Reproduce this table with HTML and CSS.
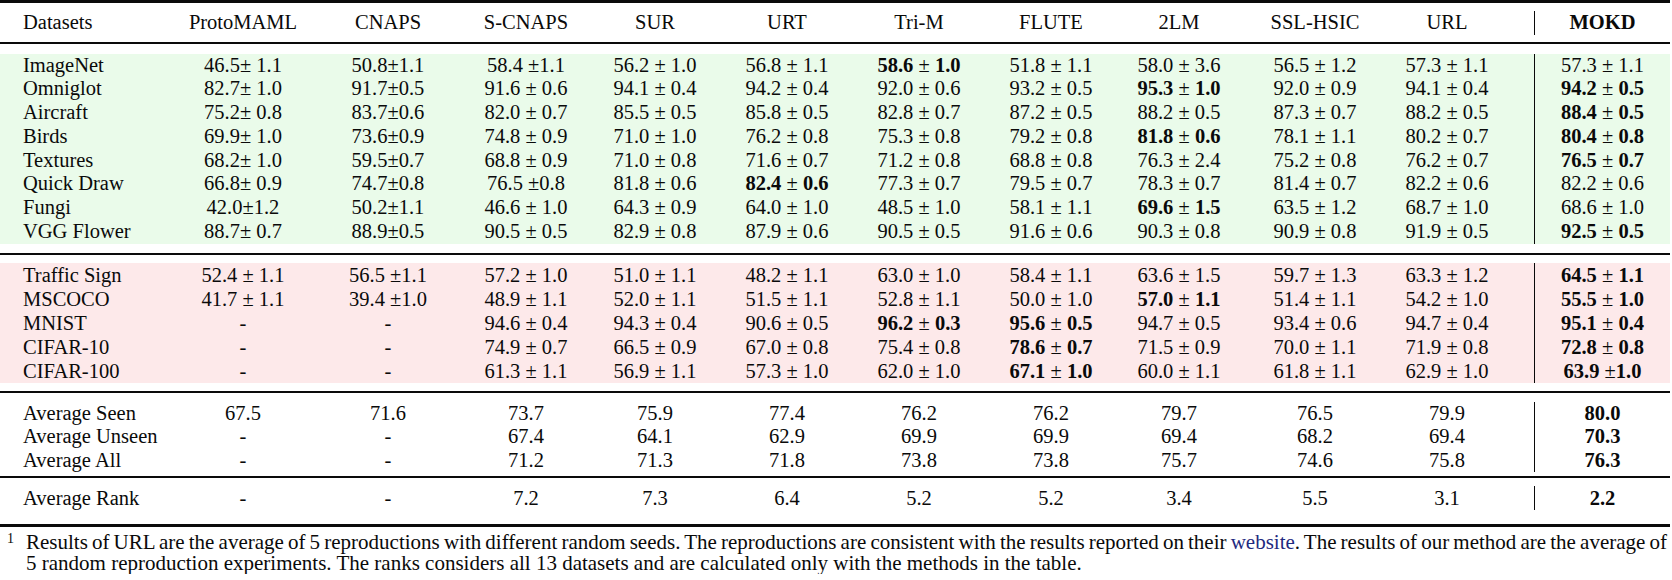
FILE: index.html
```html
<!DOCTYPE html>
<html lang="en">
<head>
<meta charset="utf-8">
<title>Results table</title>
<link rel="stylesheet" href="styles.css">
</head>
<body>
<div class="tbl">
  <div class="rule heavy top"></div>
  <div class="row head">
    <div class="c first">Datasets</div><div class="c">ProtoMAML</div><div class="c">CNAPS</div><div class="c">S-CNAPS</div><div class="c">SUR</div><div class="c">URT</div><div class="c">Tri-M</div><div class="c">FLUTE</div><div class="c">2LM</div><div class="c">SSL-HSIC</div><div class="c url">URL</div><div class="c ours"><b>MOKD</b></div>
  </div>
  <div class="rule light r1"></div>

  <div class="block seen">
    <div class="row"><div class="c first">ImageNet</div><div class="c">46.5± 1.1</div><div class="c">50.8±1.1</div><div class="c">58.4 ±1.1</div><div class="c">56.2 ± 1.0</div><div class="c">56.8 ± 1.1</div><div class="c"><b>58.6</b> ± <b>1.0</b></div><div class="c">51.8 ± 1.1</div><div class="c">58.0 ± 3.6</div><div class="c">56.5 ± 1.2</div><div class="c url">57.3 ± 1.1</div><div class="c ours">57.3 ± 1.1</div></div>
    <div class="row"><div class="c first">Omniglot</div><div class="c">82.7± 1.0</div><div class="c">91.7±0.5</div><div class="c">91.6 ± 0.6</div><div class="c">94.1 ± 0.4</div><div class="c">94.2 ± 0.4</div><div class="c">92.0 ± 0.6</div><div class="c">93.2 ± 0.5</div><div class="c"><b>95.3</b> ± <b>1.0</b></div><div class="c">92.0 ± 0.9</div><div class="c url">94.1 ± 0.4</div><div class="c ours"><b>94.2</b> ± <b>0.5</b></div></div>
    <div class="row"><div class="c first">Aircraft</div><div class="c">75.2± 0.8</div><div class="c">83.7±0.6</div><div class="c">82.0 ± 0.7</div><div class="c">85.5 ± 0.5</div><div class="c">85.8 ± 0.5</div><div class="c">82.8 ± 0.7</div><div class="c">87.2 ± 0.5</div><div class="c">88.2 ± 0.5</div><div class="c">87.3 ± 0.7</div><div class="c url">88.2 ± 0.5</div><div class="c ours"><b>88.4</b> ± <b>0.5</b></div></div>
    <div class="row"><div class="c first">Birds</div><div class="c">69.9± 1.0</div><div class="c">73.6±0.9</div><div class="c">74.8 ± 0.9</div><div class="c">71.0 ± 1.0</div><div class="c">76.2 ± 0.8</div><div class="c">75.3 ± 0.8</div><div class="c">79.2 ± 0.8</div><div class="c"><b>81.8</b> ± <b>0.6</b></div><div class="c">78.1 ± 1.1</div><div class="c url">80.2 ± 0.7</div><div class="c ours"><b>80.4</b> ± <b>0.8</b></div></div>
    <div class="row"><div class="c first">Textures</div><div class="c">68.2± 1.0</div><div class="c">59.5±0.7</div><div class="c">68.8 ± 0.9</div><div class="c">71.0 ± 0.8</div><div class="c">71.6 ± 0.7</div><div class="c">71.2 ± 0.8</div><div class="c">68.8 ± 0.8</div><div class="c">76.3 ± 2.4</div><div class="c">75.2 ± 0.8</div><div class="c url">76.2 ± 0.7</div><div class="c ours"><b>76.5</b> ± <b>0.7</b></div></div>
    <div class="row"><div class="c first">Quick Draw</div><div class="c">66.8± 0.9</div><div class="c">74.7±0.8</div><div class="c">76.5 ±0.8</div><div class="c">81.8 ± 0.6</div><div class="c"><b>82.4</b> ± <b>0.6</b></div><div class="c">77.3 ± 0.7</div><div class="c">79.5 ± 0.7</div><div class="c">78.3 ± 0.7</div><div class="c">81.4 ± 0.7</div><div class="c url">82.2 ± 0.6</div><div class="c ours">82.2 ± 0.6</div></div>
    <div class="row"><div class="c first">Fungi</div><div class="c">42.0±1.2</div><div class="c">50.2±1.1</div><div class="c">46.6 ± 1.0</div><div class="c">64.3 ± 0.9</div><div class="c">64.0 ± 1.0</div><div class="c">48.5 ± 1.0</div><div class="c">58.1 ± 1.1</div><div class="c"><b>69.6</b> ± <b>1.5</b></div><div class="c">63.5 ± 1.2</div><div class="c url">68.7 ± 1.0</div><div class="c ours">68.6 ± 1.0</div></div>
    <div class="row"><div class="c first">VGG Flower</div><div class="c">88.7± 0.7</div><div class="c">88.9±0.5</div><div class="c">90.5 ± 0.5</div><div class="c">82.9 ± 0.8</div><div class="c">87.9 ± 0.6</div><div class="c">90.5 ± 0.5</div><div class="c">91.6 ± 0.6</div><div class="c">90.3 ± 0.8</div><div class="c">90.9 ± 0.8</div><div class="c url">91.9 ± 0.5</div><div class="c ours"><b>92.5</b> ± <b>0.5</b></div></div>
  </div>
  <div class="rule light r2"></div>

  <div class="block unseen">
    <div class="row"><div class="c first">Traffic Sign</div><div class="c">52.4 ± 1.1</div><div class="c">56.5 ±1.1</div><div class="c">57.2 ± 1.0</div><div class="c">51.0 ± 1.1</div><div class="c">48.2 ± 1.1</div><div class="c">63.0 ± 1.0</div><div class="c">58.4 ± 1.1</div><div class="c">63.6 ± 1.5</div><div class="c">59.7 ± 1.3</div><div class="c url">63.3 ± 1.2</div><div class="c ours"><b>64.5</b> ± <b>1.1</b></div></div>
    <div class="row"><div class="c first">MSCOCO</div><div class="c">41.7 ± 1.1</div><div class="c">39.4 ±1.0</div><div class="c">48.9 ± 1.1</div><div class="c">52.0 ± 1.1</div><div class="c">51.5 ± 1.1</div><div class="c">52.8 ± 1.1</div><div class="c">50.0 ± 1.0</div><div class="c"><b>57.0</b> ± <b>1.1</b></div><div class="c">51.4 ± 1.1</div><div class="c url">54.2 ± 1.0</div><div class="c ours"><b>55.5</b> ± <b>1.0</b></div></div>
    <div class="row"><div class="c first">MNIST</div><div class="c">-</div><div class="c">-</div><div class="c">94.6 ± 0.4</div><div class="c">94.3 ± 0.4</div><div class="c">90.6 ± 0.5</div><div class="c"><b>96.2</b> ± <b>0.3</b></div><div class="c"><b>95.6</b> ± <b>0.5</b></div><div class="c">94.7 ± 0.5</div><div class="c">93.4 ± 0.6</div><div class="c url">94.7 ± 0.4</div><div class="c ours"><b>95.1</b> ± <b>0.4</b></div></div>
    <div class="row"><div class="c first">CIFAR-10</div><div class="c">-</div><div class="c">-</div><div class="c">74.9 ± 0.7</div><div class="c">66.5 ± 0.9</div><div class="c">67.0 ± 0.8</div><div class="c">75.4 ± 0.8</div><div class="c"><b>78.6</b> ± <b>0.7</b></div><div class="c">71.5 ± 0.9</div><div class="c">70.0 ± 1.1</div><div class="c url">71.9 ± 0.8</div><div class="c ours"><b>72.8</b> ± <b>0.8</b></div></div>
    <div class="row"><div class="c first">CIFAR-100</div><div class="c">-</div><div class="c">-</div><div class="c">61.3 ± 1.1</div><div class="c">56.9 ± 1.1</div><div class="c">57.3 ± 1.0</div><div class="c">62.0 ± 1.0</div><div class="c"><b>67.1</b> ± <b>1.0</b></div><div class="c">60.0 ± 1.1</div><div class="c">61.8 ± 1.1</div><div class="c url">62.9 ± 1.0</div><div class="c ours"><b>63.9</b> ±<b>1.0</b></div></div>
  </div>
  <div class="rule light r3"></div>

  <div class="block avg">
    <div class="row"><div class="c first">Average Seen</div><div class="c">67.5</div><div class="c">71.6</div><div class="c">73.7</div><div class="c">75.9</div><div class="c">77.4</div><div class="c">76.2</div><div class="c">76.2</div><div class="c">79.7</div><div class="c">76.5</div><div class="c url">79.9</div><div class="c ours"><b>80.0</b></div></div>
    <div class="row"><div class="c first">Average Unseen</div><div class="c">-</div><div class="c">-</div><div class="c">67.4</div><div class="c">64.1</div><div class="c">62.9</div><div class="c">69.9</div><div class="c">69.9</div><div class="c">69.4</div><div class="c">68.2</div><div class="c url">69.4</div><div class="c ours"><b>70.3</b></div></div>
    <div class="row"><div class="c first">Average All</div><div class="c">-</div><div class="c">-</div><div class="c">71.2</div><div class="c">71.3</div><div class="c">71.8</div><div class="c">73.8</div><div class="c">73.8</div><div class="c">75.7</div><div class="c">74.6</div><div class="c url">75.8</div><div class="c ours"><b>76.3</b></div></div>
  </div>
  <div class="rule light r4"></div>

  <div class="block rank">
    <div class="row"><div class="c first">Average Rank</div><div class="c">-</div><div class="c">-</div><div class="c">7.2</div><div class="c">7.3</div><div class="c">6.4</div><div class="c">5.2</div><div class="c">5.2</div><div class="c">3.4</div><div class="c">5.5</div><div class="c url">3.1</div><div class="c ours"><b>2.2</b></div></div>
  </div>
  <div class="rule heavy bottom"></div>
</div>

<div class="note">
  <span class="mark">1</span>
  <div class="note-text">
    <span class="line1">Results of URL are the average of 5 reproductions with different random seeds. The reproductions are consistent with the results reported on their <span class="link">website</span>. The results of our method are the average of</span>
    <span class="line2">5 random reproduction experiments. The ranks considers all 13 datasets and are calculated only with the methods in the table.</span>
  </div>
</div>
</body>
</html>
```

FILE: styles.css
```css
html, body {
  margin: 0;
  padding: 0;
  background: #ffffff;
}

body {
  font-family: "Liberation Serif", "Times New Roman", serif;
  color: #0a0a0a;
  font-size: 20.5px;
  width: 1672px;
}

.tbl {
  width: 1670px;
  display: flex;
  flex-direction: column;
}

.rule {
  background: #0a0a0a;
  width: 100%;
}

.rule.heavy { height: 3px; }
.rule.light { height: 2px; }

.rule.top { margin-bottom: 8px; }
.rule.r1 { margin-top: 7px; margin-bottom: 10px; }
.rule.r2 { margin-top: 9px; margin-bottom: 8px; }
.rule.r3 { margin-top: 8px; margin-bottom: 9px; }
.rule.r4 { margin-top: 3.5px; margin-bottom: 8px; }
.rule.bottom { margin-top: 14px; }

.row {
  display: grid;
  grid-template-columns: 175px 136px 154px 122px 136px 128px 136px 128px 128px 144px 147px 136px;
  height: 24px;
  align-items: center;
  line-height: 24px;
}

.row.head {
  height: 23.5px;
  line-height: 23.5px;
}

.block.seen .row {
  height: 23.75px;
  line-height: 23.75px;
}

.block.avg .row {
  height: 23.5px;
  line-height: 23.5px;
}

.c {
  text-align: center;
  white-space: pre;
  height: 100%;
}

.c.first {
  text-align: left;
  padding-left: 23px;
}

.c.url {
  padding-right: 27px;
}

.c.ours {
  border-left: 1px solid #0a0a0a;
}

.block.seen { background: #eafbea; }
.block.unseen { background: #fde9ea; }

b { font-weight: bold; }

.note {
  display: flex;
  margin-top: 5px;
  width: 1667px;
  font-size: 21px;
}

.mark {
  width: 26px;
  flex: none;
  box-sizing: border-box;
  padding-left: 7px;
  font-size: 14px;
  line-height: 14px;
}

.note-text {
  flex: 1;
  min-width: 0;
  line-height: 21px;
}

.line1 {
  display: block;
  white-space: nowrap;
  word-spacing: -1.2px;
  text-align: justify;
  text-align-last: justify;
}

.line2 {
  display: block;
}

.link {
  color: #1f2a80;
}
```
